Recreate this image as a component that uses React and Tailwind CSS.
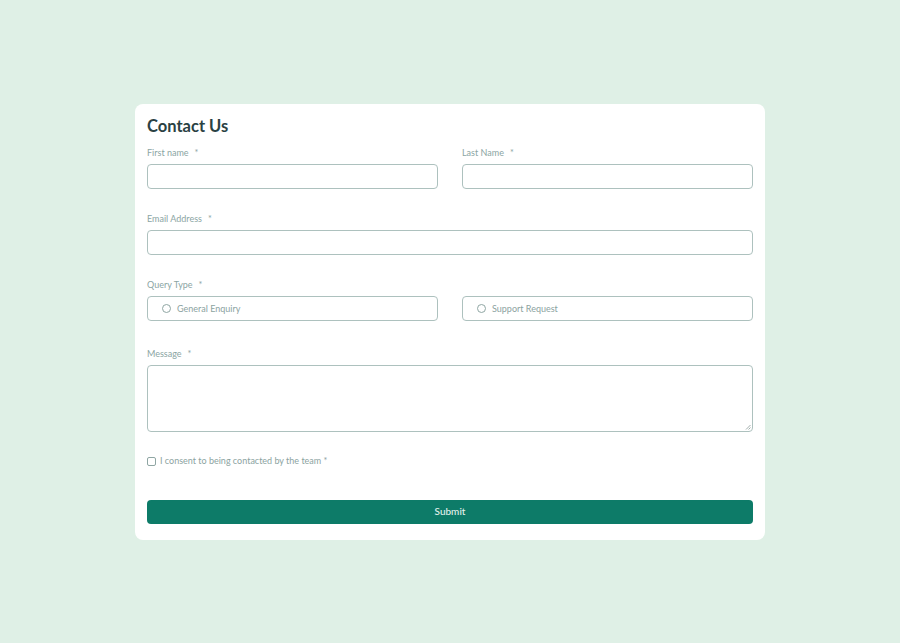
import React from "react";

function Label({ children }) {
  return (
    <div className="text-[9px] leading-[10px] pt-[2px] text-[#8ba5a3] h-[12px] flex items-center">
      <span>{children}</span>
      <span className="ml-[6px]">*</span>
    </div>
  );
}

function Radio({ label }) {
  return (
    <div className="flex-1 h-[25px] border border-[#adc1be] rounded-[4px] flex items-center pl-[14px]">
      <span className="w-[9px] h-[9px] rounded-full border border-[#8fa6a3] box-border" />
      <span className="ml-[6px] mt-[2px] text-[9px] leading-[12px] text-[#8ca39f]">{label}</span>
    </div>
  );
}

export default function App() {
  return (
    <div
      className="min-h-[643px] w-full bg-[#dff0e6] flex items-center justify-center"
      style={{ fontFamily: "Lato, 'Liberation Sans', sans-serif" }}
    >
      <div className="w-[630px] h-[436px] bg-white rounded-[8px] px-[12px] pt-[11px] pb-[16px] flex flex-col">
        <h1 className="text-[16.5px] leading-[22px] font-bold text-[#2a4143]">Contact Us</h1>

        <div className="flex gap-[24px] mt-[9px]">
          <div className="flex-1 flex flex-col">
            <Label>First name</Label>
            <div className="mt-[6px] h-[25px] border border-[#adc1be] rounded-[4px]" />
          </div>
          <div className="flex-1 flex flex-col">
            <Label>Last Name</Label>
            <div className="mt-[6px] h-[25px] border border-[#adc1be] rounded-[4px]" />
          </div>
        </div>

        <div className="mt-[23px] flex flex-col">
          <Label>Email Address</Label>
          <div className="mt-[6px] h-[25px] border border-[#adc1be] rounded-[4px]" />
        </div>

        <div className="mt-[23px] flex flex-col">
          <Label>Query Type</Label>
          <div className="mt-[6px] flex gap-[24px]">
            <Radio label="General Enquiry" />
            <Radio label="Support Request" />
          </div>
        </div>

        <div className="mt-[26px] flex flex-col">
          <Label>Message</Label>
          <div className="mt-[6px] h-[67px] border border-[#adc1be] rounded-[4px] relative">
            <svg className="absolute right-[1px] bottom-[1px]" width="6" height="6" viewBox="0 0 6 6">
              <path d="M5.5 1 L1 5.5 M5.5 3.5 L3.5 5.5" stroke="#8a9a98" strokeWidth="0.8" />
            </svg>
          </div>
        </div>

        <div className="mt-[25px] flex items-center h-[9px]">
          <span className="w-[9px] h-[9px] rounded-[2px] border border-[#8fa6a3] box-border" />
          <span className="ml-[4px] text-[9px] leading-[12px] text-[#8ca39f]">
            I consent to being contacted by the team *
          </span>
        </div>

        <div className="mt-[34px] h-[24px] bg-[#0d7b68] rounded-[4px] flex items-center justify-center text-[10px] text-[#e3f1ec] font-medium">
          Submit
        </div>
      </div>
    </div>
  );
}
